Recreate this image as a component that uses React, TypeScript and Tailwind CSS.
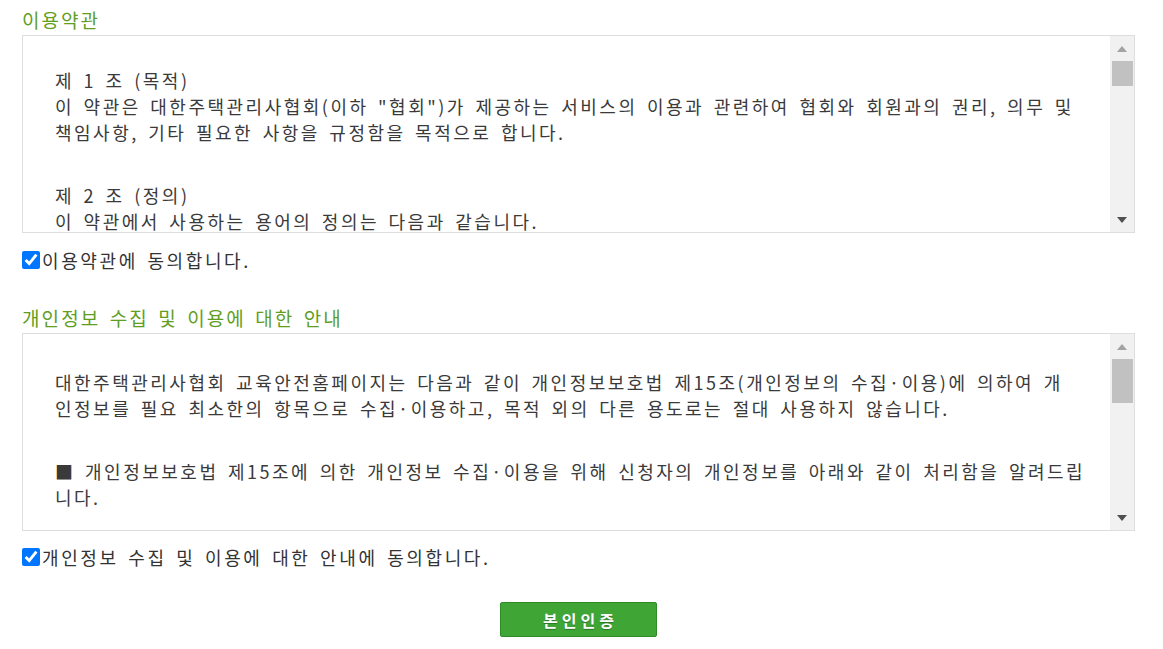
import { FC } from 'react';

interface TermsBoxProps {
  paragraphs: string[][];
  padTop: string;
  thumbHeight: string;
}

// 스크롤 영역 (텍스트 + 스크롤바)
const TermsBox: FC<TermsBoxProps> = ({ paragraphs, padTop, thumbHeight }) => {
  return (
    <div className="flex h-[198px] border border-[#dedede] bg-white">
      <div className={`flex-1 overflow-hidden pl-[32px] pr-[10px] ${padTop}`}>
        {paragraphs.map((lines, i) => (
          <p key={i} className="mb-[37px] whitespace-nowrap text-[18px] leading-[26px] tracking-[2.5px] text-[#3a3a3a] [word-spacing:3px]">
            {lines.map((line, j) => (
              <span key={j} className="block">{line}</span>
            ))}
          </p>
        ))}
      </div>
      <div className="flex w-[24px] flex-col bg-[#f1f1f1]">
        <div className="flex h-[25px] items-center justify-center">
          <svg width="10" height="6" viewBox="0 0 10 6">
            <path d="M0 6 L5 0 L10 6 Z" fill="#a3a3a3" />
          </svg>
        </div>
        <div className="px-[2px] pr-[1px]">
          <div className={`w-full bg-[#c1c1c1] ${thumbHeight}`}></div>
        </div>
        <div className="flex-1"></div>
        <div className="flex h-[25px] items-center justify-center">
          <svg width="10" height="6" viewBox="0 0 10 6">
            <path d="M0 0 L10 0 L5 6 Z" fill="#505050" />
          </svg>
        </div>
      </div>
    </div>
  );
};

const AgreeRow: FC<{ label: string; className: string }> = ({ label, className }) => (
  <label className={`flex h-[24px] items-center ${className}`}>
    <input type="checkbox" defaultChecked className="m-0 h-[18px] w-[18px] shrink-0 accent-[#0075ff]" />
    <span className="ml-[2px] whitespace-nowrap text-[18px] leading-[24px] tracking-[2.6px] text-[#333] [word-spacing:3px]">{label}</span>
  </label>
);

const terms = [
  [
    '제 1 조 (목적)',
    '이 약관은 대한주택관리사협회(이하 "협회")가 제공하는 서비스의 이용과 관련하여 협회와 회원과의 권리, 의무 및',
    '책임사항, 기타 필요한 사항을 규정함을 목적으로 합니다.',
  ],
  [
    '제 2 조 (정의)',
    '이 약관에서 사용하는 용어의 정의는 다음과 같습니다.',
    '1. "회원"이라 함은 협회에 개인정보를 제공하여 회원등록을 한 자를 말합니다.',
  ],
];

const privacy = [
  [
    '대한주택관리사협회 교육안전홈페이지는 다음과 같이 개인정보보호법 제15조(개인정보의 수집·이용)에 의하여 개',
    '인정보를 필요 최소한의 항목으로 수집·이용하고, 목적 외의 다른 용도로는 절대 사용하지 않습니다.',
  ],
  [
    '■ 개인정보보호법 제15조에 의한 개인정보 수집·이용을 위해 신청자의 개인정보를 아래와 같이 처리함을 알려드립',
    '니다.',
  ],
  ['1. 수집·이용 목적 : 본인확인 및 교육신청'],
];

export default function App() {
  return (
    <div className="min-h-[649px] bg-white font-['Noto_Sans_CJK_KR',sans-serif]">
      <div className="ml-[22px] w-[1113px]">
        <h2 className="pt-[8px] pb-[3px] text-[19px] font-normal leading-[24px] tracking-[2px] text-[#5f9e1f]">이용약관</h2>
        <TermsBox paragraphs={terms} padTop="pt-[31px]" thumbHeight="h-[25px]" />
        <AgreeRow label="이용약관에 동의합니다." className="mt-[15px]" />

        <h2 className="mt-[34px] mb-[3px] text-[19px] font-normal leading-[24px] tracking-[2.1px] text-[#5f9e1f] [word-spacing:3px]">
          개인정보 수집 및 이용에 대한 안내
        </h2>
        <TermsBox paragraphs={privacy} padTop="pt-[35px]" thumbHeight="h-[44px]" />
        <AgreeRow label="개인정보 수집 및 이용에 대한 안내에 동의합니다." className="mt-[14px]" />

        <div className="mt-[33px] flex justify-center">
          <button className="h-[35px] w-[157px] rounded-[2px] border border-[#2f8a2a] bg-[#3fa636] pl-[4px] text-[16px] font-bold tracking-[4px] text-white [text-shadow:0_1px_1px_rgba(0,0,0,0.3)]">
            본인인증
          </button>
        </div>
      </div>
    </div>
  );
}
